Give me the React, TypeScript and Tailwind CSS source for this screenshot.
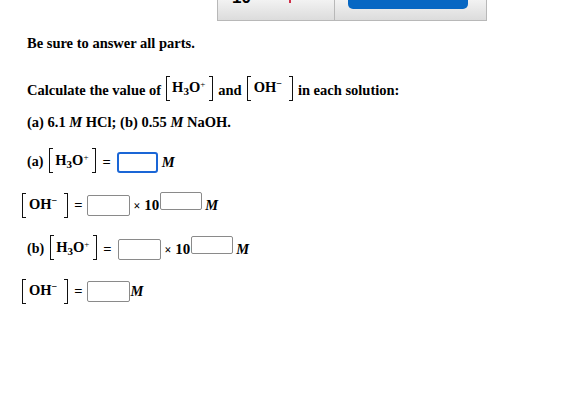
import React from "react";

// tall square bracket, drawn with borders
function LBr() {
  return <span className="inline-block h-[25px] w-[4px] border-l-[1.5px] border-t-[1.5px] border-b-[1.5px] border-[#111]" />;
}
function RBr() {
  return <span className="inline-block h-[25px] w-[4px] border-r-[1.5px] border-t-[1.5px] border-b-[1.5px] border-[#111]" />;
}

function H3O() {
  return (
    <span className="inline-flex items-center gap-[2px]">
      <LBr />
      <span className="font-bold whitespace-nowrap mr-[2px]">
        H<span className="relative top-[3px] text-[11px]">3</span>O<span className="relative -top-[5px] text-[9px] font-normal">+</span>
      </span>
      <RBr />
    </span>
  );
}

function OH() {
  return (
    <span className="inline-flex items-center gap-[3px]">
      <LBr />
      <span className="font-bold whitespace-nowrap mr-[4px]">
        OH<span className="relative -top-[5px] text-[10px]">−</span>
      </span>
      <RBr />
    </span>
  );
}

function Box({ active = false }: { active?: boolean }) {
  if (active) return <span className="inline-block h-[21px] w-[41px] rounded-[3px] border-2 border-[#1a66d6] bg-white" />;
  return <span className="inline-block h-[21px] w-[43px] rounded-[2px] border border-[#8a8a8a] bg-white" />;
}

function SupBox() {
  return <span className="inline-block h-[18px] w-[42px] rounded-[2px] border border-[#8a8a8a] bg-white mb-[8px]" />;
}

function Times10() {
  return (
    <span className="font-bold ml-[4px] whitespace-nowrap text-[15px]">
      <span className="text-[12px]">×</span> 10
    </span>
  );
}

const M = () => <span className="font-bold italic">M</span>;

export default function App() {
  return (
    <div
      className="w-[584px] h-[410px] bg-white overflow-hidden text-black text-[14.5px]"
      style={{ fontFamily: '"Liberation Serif", "Times New Roman", serif' }}
    >
      {/* cut-off toolbar at the top */}
      <div className="ml-[217px] w-[270px] h-[21px] flex border-x border-b border-[#b8b8b8] bg-gradient-to-b from-[#f2f2f2] to-[#dcdcdc]">
        <div className="w-[117px] border-r border-[#b8b8b8] flex overflow-hidden">
          <span className="ml-[14px] -mt-[11px] text-[17px] font-bold leading-[17px]" style={{ fontFamily: '"Liberation Sans", Arial, sans-serif' }}>10</span>
          <span className="ml-[38px] w-[2px] h-[3px] bg-[#d0304a]" />
        </div>
        <div className="flex-1 pl-[13px]">
          <div className="w-[120px] h-[9px] rounded-b-[5px] bg-[#0767c3]" />
        </div>
      </div>

      <div className="pl-[27px]">
        <div className="mt-[14px] leading-[16px] font-bold">Be sure to answer all parts.</div>

        <div className="mt-[26px] h-[25px] flex items-center font-bold leading-[16px] whitespace-nowrap">
          <span>Calculate the value of</span>
          <span className="ml-[5px]"><H3O /></span>
          <span className="ml-[5px]">and</span>
          <span className="ml-[5px]"><OH /></span>
          <span className="ml-[5px]">in each solution:</span>
        </div>

        <div className="mt-[12px] leading-[16px] font-bold">
          (a) 6.1 <span className="italic">M</span> HCl; (b) 0.55 <span className="italic">M</span> NaOH.
        </div>

        {/* (a) */}
        <div className="mt-[20px] h-[24px] flex items-center leading-[16px]">
          <span className="font-bold text-[14px]">(a)</span>
          <span className="ml-[6px]"><H3O /></span>
          <span className="ml-[6px] font-bold">=</span>
          <span className="ml-[6px] flex"><Box active /></span>
          <span className="ml-[4px]"><M /></span>
        </div>

        <div className="mt-[19px] -ml-[5px] h-[24px] flex items-center leading-[16px]">
          <OH />
          <span className="ml-[6px] font-bold">=</span>
          <span className="ml-[4px] flex"><Box /></span>
          <Times10 />
          <span className="ml-[1px] flex"><SupBox /></span>
          <span className="ml-[3px]"><M /></span>
        </div>

        {/* (b) */}
        <div className="mt-[20px] h-[24px] flex items-center leading-[16px]">
          <span className="font-bold text-[14px]">(b)</span>
          <span className="ml-[6px]"><H3O /></span>
          <span className="ml-[6px] font-bold">=</span>
          <span className="ml-[6px] flex"><Box /></span>
          <Times10 />
          <span className="ml-[1px] flex"><SupBox /></span>
          <span className="ml-[3px]"><M /></span>
        </div>

        <div className="mt-[18px] -ml-[5px] h-[24px] flex items-center leading-[16px]">
          <OH />
          <span className="ml-[6px] font-bold">=</span>
          <span className="ml-[4px] flex"><Box /></span>
          <span className="ml-[1px]"><M /></span>
        </div>
      </div>
    </div>
  );
}
